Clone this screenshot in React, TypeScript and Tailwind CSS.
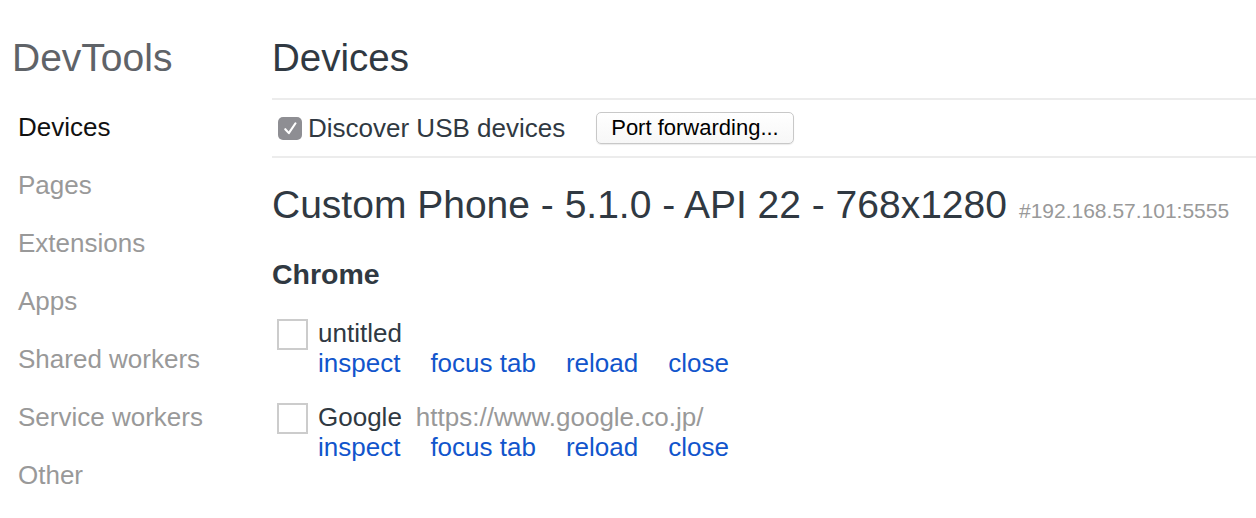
import { Fragment } from 'react';

const sideItems = ['Devices', 'Pages', 'Extensions', 'Apps', 'Shared workers', 'Service workers', 'Other'];

const pages = [
    { title: 'untitled', url: '' },
    { title: 'Google', url: 'https://www.google.co.jp/' },
];

const actions = ['inspect', 'focus tab', 'reload', 'close'];

function CheckedBox() {
    return (
        <span className="flex items-center justify-center w-[24px] h-[23px] rounded-[5px] bg-[#8e8e93]">
            <svg width="19" height="19" viewBox="0 0 16 16" fill="none">
                <path d="M3.6 8.6 L6.6 11.9 L12.2 3.6" stroke="#fff" strokeWidth="1.8" strokeLinecap="round" strokeLinejoin="round" />
            </svg>
        </span>
    );
}

export default function App() {
    return (
        <div className="flex w-[1256px] h-[518px] bg-white overflow-hidden font-['Liberation_Sans',Arial,sans-serif]">
            {/* sidebar */}
            <div className="w-[272px] shrink-0 pl-[12px] pt-[35px]">
                <div className="text-[39px] leading-[46px] text-[#5f6368]">DevTools</div>
                <nav className="mt-[17px] pl-[6px]">
                    {sideItems.map((name, i) => (
                        <div
                            key={name}
                            className={i === 0 ? 'text-[26px] leading-[58px] text-[#111]' : 'text-[26px] leading-[58px] text-[#999]'}
                        >
                            {name}
                        </div>
                    ))}
                </nav>
            </div>

            {/* main */}
            <div className="flex-1 pt-[35px] text-[#303942]">
                <h1 className="text-[38.5px] leading-[46px]">Devices</h1>
                <div className="mt-[17px] h-[2px] bg-[#ececec]" />

                <div className="flex items-center h-[56px] pl-[6px]">
                    <CheckedBox />
                    <span className="ml-[6px] text-[26px] leading-[30px]">Discover USB devices</span>
                    <button className="ml-[31px] h-[32px] px-[14px] rounded-[5px] border border-[#c8c8c8] bg-gradient-to-b from-white to-[#f7f7f7] shadow-[0_1px_1px_rgba(0,0,0,0.08)] text-[22px] leading-[30px] text-black">
                        Port forwarding...
                    </button>
                </div>
                <div className="h-[2px] bg-[#ececec]" />

                <div className="mt-[24px] flex items-baseline">
                    <span className="text-[39px] leading-[46px]">Custom Phone - 5.1.0 - API 22 - 768x1280</span>
                    <span className="ml-[12px] text-[21px] text-[#999]">#192.168.57.101:5555</span>
                </div>

                <div className="mt-[30px] text-[28.5px] leading-[32px] font-bold">Chrome</div>

                <div className="mt-[29px] flex flex-col gap-[25px] pl-[5px]">
                    {pages.map((p) => (
                        <div key={p.title} className="flex items-start">
                            <div className="w-[31px] h-[31px] shrink-0 border-2 border-[#cccccc]" />
                            <div className="ml-[10px] -mt-[1px] text-[26px] leading-[30px]">
                                <div className="flex">
                                    <span>{p.title}</span>
                                    {p.url && <span className="ml-[14px] text-[#999]">{p.url}</span>}
                                </div>
                                <div className="flex gap-[30px] text-[#1155cc]">
                                    {actions.map((a) => (
                                        <Fragment key={a}>
                                            <span className="cursor-pointer">{a}</span>
                                        </Fragment>
                                    ))}
                                </div>
                            </div>
                        </div>
                    ))}
                </div>
            </div>
        </div>
    );
}
